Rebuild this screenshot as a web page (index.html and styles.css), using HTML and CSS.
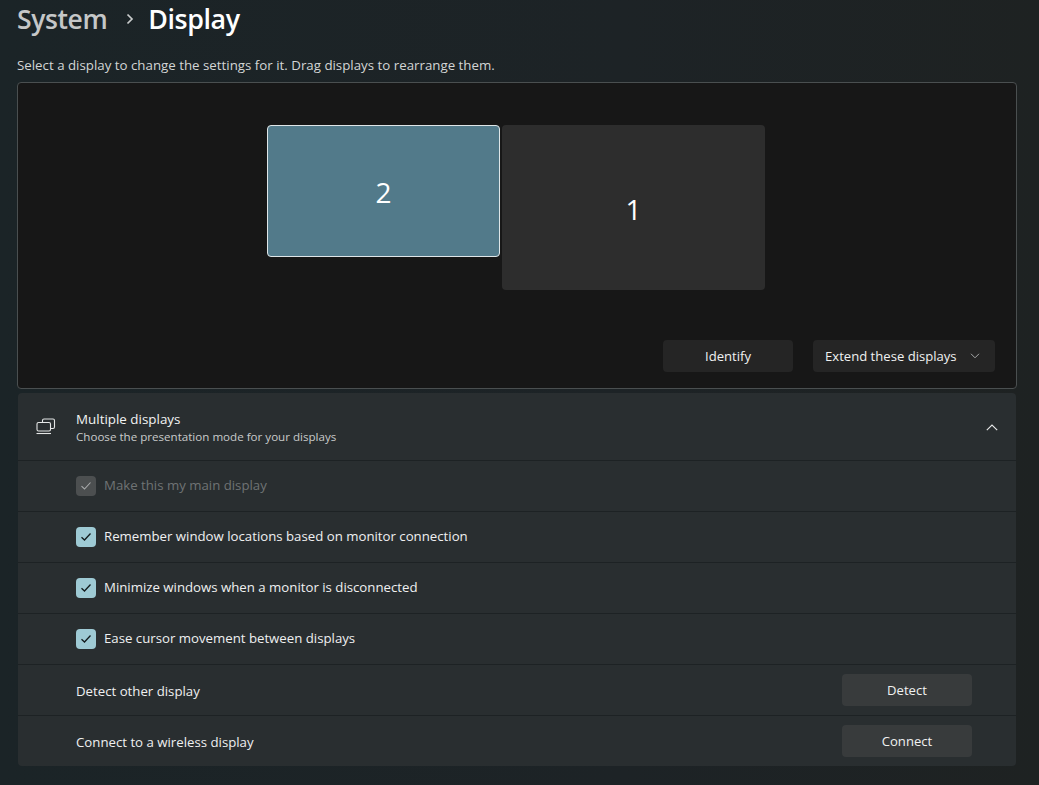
FILE: index.html
```html
<!DOCTYPE html>
<html lang="en">
<head>
<meta charset="utf-8">
<title>Display</title>
<link rel="stylesheet" href="styles.css">
</head>
<body>
<main class="page">
  <header class="crumbs">
    <span class="crumb-parent">System</span>
    <svg class="crumb-sep" width="10" height="12" viewBox="0 0 10 12"><path d="M2.500 1.500 7 6l-4.500 4.500" fill="none" stroke="#c9cccc" stroke-width="1.700"/></svg>
    <span class="crumb-current">Display</span>
  </header>
  <p class="hint">Select a display to change the settings for it. Drag displays to rearrange them.</p>
  <section class="canvas">
    <div class="monitor monitor-two"><span class="monitor-num">2</span></div>
    <div class="monitor monitor-one"><span class="monitor-num">1</span></div>
    <div class="canvas-actions">
      <button class="btn btn-dark btn-identify">Identify</button>
      <button class="btn btn-dark btn-extend">Extend these displays
        <svg width="10" height="6" viewBox="0 0 10 6"><path d="M1 .8 5 4.800 9 .8" fill="none" stroke="#a5a7a7" stroke-width="1"/></svg>
      </button>
    </div>
  </section>
  <section class="card">
    <div class="card-head">
      <svg class="head-icon" width="20" height="18" viewBox="0 0 20 18"><g fill="none" stroke="#e4e6e6" stroke-width="1.100"><path d="M6.500 4V2.500A1.500 1.500 0 0 1 8 1h9a1.500 1.500 0 0 1 1.500 1.500V9A1.500 1.500 0 0 1 17 10.500h-2.500"/><rect x="1" y="4.500" width="13.500" height="8.500" rx="1.500"/><path d="M.5 15.500h14.500"/></g></svg>
      <div class="head-text">
        <div class="head-title">Multiple displays</div>
        <div class="head-sub">Choose the presentation mode for your displays</div>
      </div>
      <svg class="head-chevron" width="12" height="7" viewBox="0 0 12 7"><path d="M.8 6.200 6 1l5.200 5.200" fill="none" stroke="#e8e9e9" stroke-width="1.100"/></svg>
    </div>
    <div class="row row-check is-disabled">
      <span class="check"><svg width="12" height="10" viewBox="0 0 12 10"><path d="M1.500 5.200 4.500 8l6-6.500" fill="none" stroke="#a9abac" stroke-width="1.100"/></svg></span>
      <span class="check-label">Make this my main display</span>
    </div>
    <div class="row row-check">
      <span class="check"><svg width="12" height="10" viewBox="0 0 12 10"><path d="M1.500 5.200 4.500 8l6-6.500" fill="none" stroke="#121a1c" stroke-width="1.300"/></svg></span>
      <span class="check-label">Remember window locations based on monitor connection</span>
    </div>
    <div class="row row-check">
      <span class="check"><svg width="12" height="10" viewBox="0 0 12 10"><path d="M1.500 5.200 4.500 8l6-6.500" fill="none" stroke="#121a1c" stroke-width="1.300"/></svg></span>
      <span class="check-label">Minimize windows when a monitor is disconnected</span>
    </div>
    <div class="row row-check">
      <span class="check"><svg width="12" height="10" viewBox="0 0 12 10"><path d="M1.500 5.200 4.500 8l6-6.500" fill="none" stroke="#121a1c" stroke-width="1.300"/></svg></span>
      <span class="check-label">Ease cursor movement between displays</span>
    </div>
    <div class="row row-action">
      <span class="row-label">Detect other display</span>
      <button class="btn btn-light">Detect</button>
    </div>
    <div class="row row-action">
      <span class="row-label">Connect to a wireless display</span>
      <button class="btn btn-light">Connect</button>
    </div>
  </section>
</main>
</body>
</html>
```
FILE: styles.css
```css
* { box-sizing: border-box; }
html, body { height: 100%; }
body {
  margin: 0;
  overflow: hidden;
  background: linear-gradient(90deg, #1b2427 0%, #1d2326 60%, #1e2222 100%);
  color: #fff;
  font-family: "Open Sans", "Noto Sans", sans-serif;
  font-size: 14px;
}
.page { width: 1039px; height: 785px; padding: 0 22px 0 17px; }
.crumbs { display: flex; align-items: center; height: 37px; font-size: 26.500px; font-weight: 600; letter-spacing: -0.4px; }
.crumb-parent { color: #c5c7c8; }
.crumb-sep { margin: 0 13px 0 18px; }
.crumb-current { color: #fff; font-size: 26.800px; }
.hint { margin: 19px 0 8px; height: 18px; line-height: 18px; font-size: 13.300px; color: #d3d5d5; }
.canvas {
  position: relative;
  display: flex;
  align-items: flex-end;
  justify-content: flex-end;
  height: 307px;
  padding: 0 21px 16px;
  background: #171717;
  border: 1px solid #4a4f50;
  border-radius: 4px;
}
.monitor {
  position: absolute;
  display: flex;
  align-items: center;
  justify-content: center;
  border-radius: 4px;
  font-size: 28px;
  color: #fff;
}
.monitor-num { padding-top: 2px; }
.monitor-two { left: 249px; top: 42px; width: 233px; height: 132px; background: #527a8a; border: 1px solid #dfe6e8; }
.monitor-one { left: 484px; top: 42px; width: 263px; height: 165px; background: #2d2d2d; }
.canvas-actions { display: flex; gap: 20px; }
.btn {
  height: 32px;
  padding: 0;
  border: 0;
  border-radius: 4px;
  font: inherit;
  font-size: 13.100px;
  color: #f0f1f1;
}
.btn-dark { background: #252525; }
.btn-identify { width: 130px; }
.btn-extend { display: flex; align-items: center; justify-content: space-between; width: 182px; padding: 0 15px 0 12px; }
.btn-light { width: 130px; background: #383b3c; }
.card { margin: 4px 1px 0; background: #292e30; border-radius: 4px; }
.card-head { display: flex; align-items: center; height: 67px; padding: 0 18px; }
.head-icon { flex: none; margin-right: 20px; }
.head-text { flex: 1; padding-top: 2px; }
.head-title { font-size: 13.400px; line-height: 18px; color: #f2f3f3; }
.head-sub { font-size: 11.600px; line-height: 18px; color: #c8caca; }
.head-chevron { margin-top: 1px; }
.row { display: flex; align-items: center; height: 51px; padding-left: 58px; border-top: 1px solid #1d2224; font-size: 13.220px; color: #eff0f0; }
.row-check { gap: 8px; }
.check-label { padding-bottom: 2px; }
.is-disabled { color: #6f7374; }
.check { display: flex; align-items: center; justify-content: center; width: 20px; height: 20px; border-radius: 4px; background: #9ecad4; }
.is-disabled .check { background: #4c4f50; }
.row-action { justify-content: space-between; padding-right: 44px; }
.row-label { padding-top: 2px; }
```
